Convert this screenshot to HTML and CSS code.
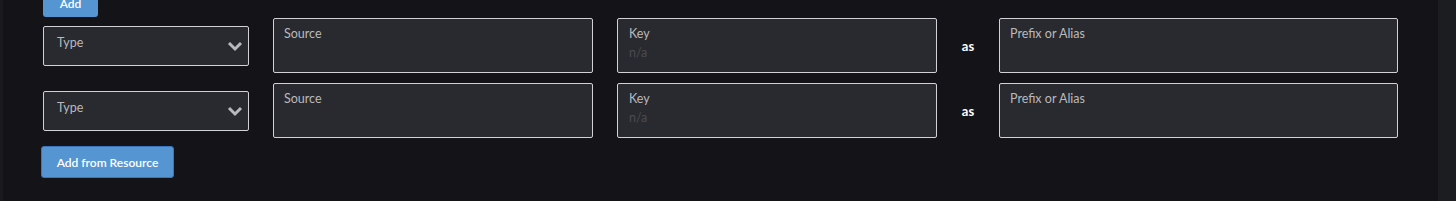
FILE: index.html
```html
<!DOCTYPE html>
<html lang="en">
<head>
    <meta charset="UTF-8">
    <title>Imports</title>
    <link rel="stylesheet" href="styles.css">
</head>
<body>
    <div class="page">
        <div class="panel">
            <button class="btn btn-add">Add</button>
            <div class="rows">
                <div class="row">
                    <div class="select">
                        <span>Type</span>
                        <svg class="chevron" width="16" height="11" viewBox="0 0 16 11"><path d="M2 2 L8 8 L14 2" fill="none" stroke="#b9b9bd" stroke-width="3"/></svg>
                    </div>
                    <div class="field source"><span class="label">Source</span></div>
                    <div class="field key"><span class="label">Key</span><span class="hint">n/a</span></div>
                    <div class="as">as</div>
                    <div class="field alias"><span class="label">Prefix or Alias</span></div>
                </div>
                <div class="row">
                    <div class="select">
                        <span>Type</span>
                        <svg class="chevron" width="16" height="11" viewBox="0 0 16 11"><path d="M2 2 L8 8 L14 2" fill="none" stroke="#b9b9bd" stroke-width="3"/></svg>
                    </div>
                    <div class="field source"><span class="label">Source</span></div>
                    <div class="field key"><span class="label">Key</span><span class="hint">n/a</span></div>
                    <div class="as">as</div>
                    <div class="field alias"><span class="label">Prefix or Alias</span></div>
                </div>
            </div>
            <button class="btn btn-resource">Add from Resource</button>
        </div>
        <div class="side"></div>
    </div>
</body>
</html>
```

FILE: styles.css
```css
body {
    margin: 0;
    background: #141418;
    font-family: 'Lato', 'Noto Sans', sans-serif;
    font-size: 12px;
    color: #b9b9bd;
}
.page {
    display: flex;
    height: 201px;
    overflow: hidden;
}
.panel {
    flex: 1;
    border-left: 3px solid #1a1a1e;
    padding-left: 38px;
    margin-top: -11px;
}
.side {
    width: 18px;
    background: #1c1d21;
}
.btn {
    display: block;
    font-family: inherit;
    font-weight: 600;
    font-size: 12px;
    color: #fff;
    background: #5596d2;
    border: none;
    border-radius: 3px;
    cursor: pointer;
}
.btn-add {
    margin-left: 2px;
    width: 55px;
    height: 28px;
    padding-top: 2px;
}
.btn-resource {
    width: 133px;
    height: 32px;
    border: 1px solid #3c77bd;
    margin-top: 8px;
}
.rows {
    display: flex;
    flex-direction: column;
    gap: 10px;
    margin-top: 1px;
}
.row {
    display: flex;
    align-items: center;
    padding-left: 2px;
}
.select {
    width: 206px;
    height: 40px;
    box-sizing: border-box;
    border: 1px solid #d2d2d6;
    border-radius: 2px;
    background: #292a2f;
    display: flex;
    align-items: center;
    justify-content: space-between;
    padding: 0 5px 0 13px;
    margin-right: 24px;
}
.select span {
    margin-top: -6px;
    font-size: 12.5px;
}
.chevron {
    margin-top: 2px;
}
.field {
    height: 55px;
    box-sizing: border-box;
    border: 1px solid #d2d2d6;
    border-radius: 2px;
    background: #292a2f;
    padding: 7px 10px;
    display: flex;
    flex-direction: column;
    gap: 4px;
    font-size: 12.5px;
}
.source {
    width: 320px;
    margin-right: 24px;
}
.key {
    width: 320px;
    padding-left: 11px;
}
.alias {
    width: 399px;
}
.hint {
    color: #4a4b50;
}
.as {
    width: 62px;
    text-align: center;
    color: #fff;
    font-weight: 700;
    font-size: 13px;
}
```
